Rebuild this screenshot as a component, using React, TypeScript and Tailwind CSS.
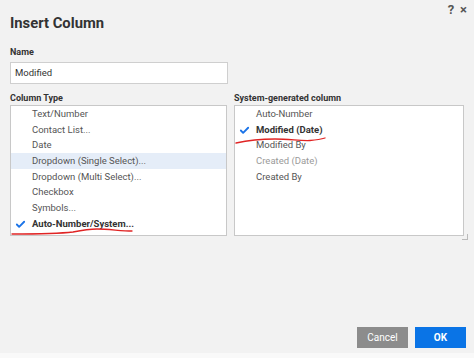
import { Check } from 'lucide-react';

const typeItems = [
    'Text/Number',
    'Contact List...',
    'Date',
    'Dropdown (Single Select)...',
    'Dropdown (Multi Select)...',
    'Checkbox',
    'Symbols...',
    'Auto-Number/System...',
];

const systemItems = [
    { label: 'Auto-Number' },
    { label: 'Modified (Date)', selected: true },
    { label: 'Modified By' },
    { label: 'Created (Date)', disabled: true },
    { label: 'Created By' },
];

function Row({ label, selected, disabled, hover, indent }: { label: string; selected?: boolean; disabled?: boolean; hover?: boolean; indent: string }) {
    return (
        <div className={`relative flex h-[15.66px] items-center ${indent} ${hover ? 'bg-[#e5edf8]' : ''}`}>
            {selected && (
                <Check className="absolute left-[4px] top-[3px] h-[11px] w-[11px] text-[#1a73e8]" strokeWidth={4} />
            )}
            <span
                className={`text-[9.5px] leading-none ${
                    selected ? 'font-bold text-[#333]' : disabled ? 'text-[#9a9a9a]' : 'text-[#555]'
                }`}
            >
                {label}
            </span>
        </div>
    );
}

export default function App() {
    return (
        <div className="relative h-[358px] w-[474px] bg-[#f2f2f2] font-['Roboto',sans-serif] text-[#333]">
            <div className="absolute right-[7px] top-[0px] flex gap-[6px] text-[13px] font-bold text-[#555]">
                <span>?</span>
                <span>×</span>
            </div>

            <div className="px-[10px] pt-[12px]">
                <h1 className="text-[14.8px] font-bold leading-[22px] text-[#333]">Insert Column</h1>

                <div className="mt-[12px] text-[9px] font-bold leading-[12px]">Name</div>
                <div className="mt-[4px] flex h-[22px] w-[218px] items-center border border-[#cfcfcf] bg-white px-[4px] text-[9.5px] text-[#333]">
                    Modified
                </div>

                <div className="mt-[8px] flex gap-[7px]">
                    <div className="w-[218px]">
                        <div className="text-[9px] font-bold leading-[12px]">Column Type</div>
                        <div className="relative mt-[1px] h-[131px] border border-[#c8c8c8] bg-white">
                            {typeItems.map((item, i) => (
                                <Row
                                    key={item}
                                    label={item}
                                    indent="pl-[21px]"
                                    hover={i === 3}
                                    selected={i === 7}
                                />
                            ))}
                            <svg className="absolute left-0 top-[120px]" width="130" height="12" viewBox="0 0 130 12">
                                <path
                                    d="M1 8 C 20 8, 45 8, 62 6 C 72 4, 78 3, 86 3 C 98 3, 110 5, 121 5"
                                    fill="none"
                                    stroke="#e02424"
                                    strokeWidth="1.3"
                                    strokeLinecap="round"
                                />
                            </svg>
                        </div>
                    </div>

                    <div className="w-[231px]">
                        <div className="text-[9px] font-bold leading-[12px]">System-generated column</div>
                        <div className="relative mt-[1px] h-[131px] border border-[#c8c8c8] bg-white">
                            {systemItems.map((item) => (
                                <Row
                                    key={item.label}
                                    label={item.label}
                                    indent="pl-[21px]"
                                    selected={item.selected}
                                    disabled={item.disabled}
                                />
                            ))}
                            <svg className="absolute left-0 top-[30px]" width="100" height="12" viewBox="0 0 100 12">
                                <path
                                    d="M1 7 C 10 5, 25 3, 40 3 C 55 3, 65 5, 75 4.5 C 82 4, 87 3, 90 2"
                                    fill="none"
                                    stroke="#e02424"
                                    strokeWidth="1.3"
                                    strokeLinecap="round"
                                />
                            </svg>
                            <div className="absolute bottom-[-5px] right-[-5px] h-[6px] w-[6px] border-b border-r border-[#bbb]" />
                        </div>
                    </div>
                </div>
            </div>

            <div className="absolute bottom-[10px] right-[8px] flex gap-[7px]">
                <button className="h-[21px] w-[51px] bg-[#8c8c8c] text-[10px] text-white">Cancel</button>
                <button className="h-[21px] w-[51px] bg-[#0a74e6] text-[10px] font-bold text-white">OK</button>
            </div>
            <div className="absolute bottom-0 left-0 h-[5px] w-full bg-[#f9f9f9]" />
        </div>
    );
}
